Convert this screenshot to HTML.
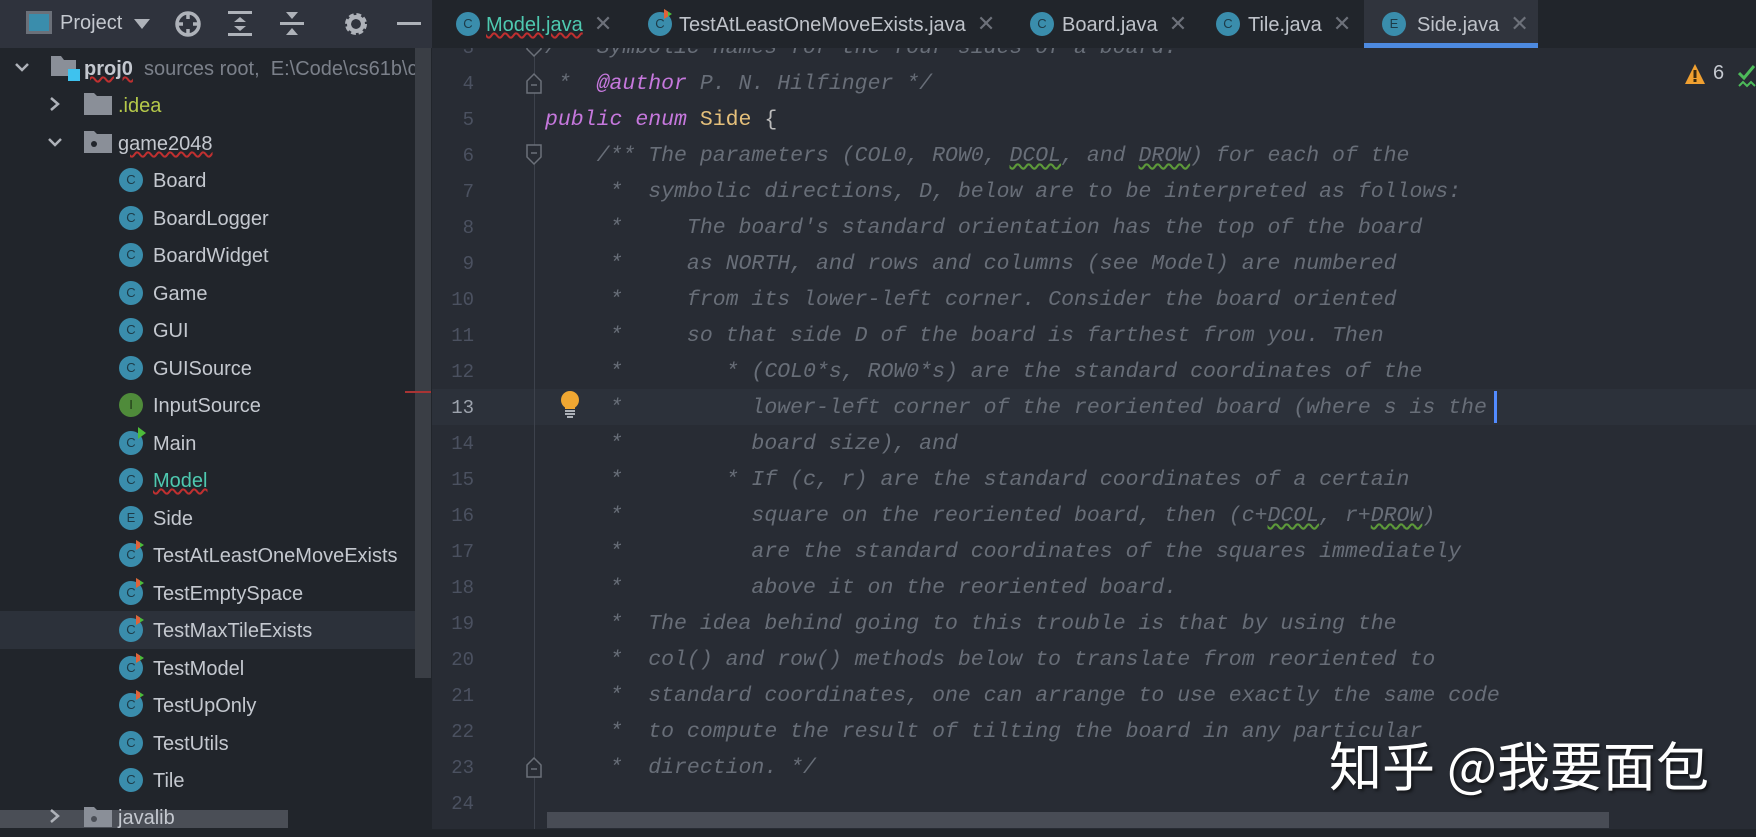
<!DOCTYPE html>
<html><head><meta charset="utf-8"><style>
*{margin:0;padding:0;box-sizing:border-box}
body{width:1756px;height:837px;overflow:hidden;background:#282c34;position:relative;font-family:"Liberation Sans","Noto Sans CJK SC",sans-serif}
.a{position:absolute}
#side{left:0;top:0;width:432px;height:837px;background:#21252b}
#tb{left:0;top:0;width:432px;height:48px;background:#2f333d}
#tabs{left:432px;top:0;width:1324px;height:48px;background:#21252b}
.row{position:absolute;height:37px;line-height:38px;font-size:20px;color:#c4c8cf;white-space:nowrap}
.ci{position:absolute;width:24px;height:24px;border-radius:50%;background:#3a8dac;color:#1d3b48;font-size:13px;text-align:center;line-height:24px;font-family:"Liberation Sans",sans-serif}
.code{position:absolute;left:545px;font-family:"Liberation Mono",monospace;font-size:21.5px;white-space:pre;color:#686e78;font-style:italic;height:36px;line-height:38px}
.ln{position:absolute;left:440px;width:34px;text-align:right;font-family:"Liberation Mono",monospace;font-size:19px;color:#4b5160;height:36px;line-height:38px}
.tab{position:absolute;top:0;height:48px;line-height:48px;font-size:20px;color:#bfc3ca;white-space:nowrap}
.x{color:#6d717a;font-size:22px}
.w{text-decoration:underline wavy #5d9a3a}
</style></head><body>
<div id="side" class="a"></div>
<div class="a" style="left:0;top:611px;width:415px;height:38px;background:#2c313a"></div>
<div id="tb" class="a"></div>
<div class="a" style="left:26px;top:11px;width:26px;height:23px;border:3px solid #6b7079;background:#3a8dac"></div>
<div class="a" style="left:60px;top:0;height:48px;line-height:46px;font-size:20px;color:#c4c8cf">Project</div>
<svg class="a" style="left:133px;top:14px" width="18" height="18"><path d="M1 5h16l-8 10z" fill="#aeb2b9"/></svg>
<svg class="a" style="left:174px;top:10px" width="28" height="28" fill="none" stroke="#aeb2b9" stroke-width="3.5"><circle cx="14" cy="14" r="11"/><path d="M14 2v7M14 19v7M2 14h7M19 14h7"/></svg>
<svg class="a" style="left:226px;top:10px" width="28" height="28" fill="#aeb2b9"><rect x="2" y="1" width="24" height="3"/><rect x="2" y="23" width="24" height="3"/><path d="M14 7l6 5H8zM14 21l6-5H8z"/></svg>
<svg class="a" style="left:278px;top:10px" width="28" height="28" fill="#aeb2b9"><rect x="2" y="12" width="24" height="3"/><path d="M8 2h12l-6 7zM8 25h12l-6-7z"/></svg>
<svg class="a" style="left:343px;top:11px" width="26" height="26"><circle cx="13" cy="13" r="8" fill="none" stroke="#aeb2b9" stroke-width="6" stroke-dasharray="4 2.3"/><circle cx="13" cy="13" r="7" fill="none" stroke="#aeb2b9" stroke-width="4"/></svg>
<div class="a" style="left:397px;top:22px;width:24px;height:3px;background:#aeb2b9"></div>

<svg class="a" style="left:14px;top:60px" width="16" height="16" fill="none" stroke="#aeb2b9" stroke-width="2.5"><path d="M2 4l6 6 6-6"/></svg>
<svg class="a" style="left:50px;top:54px" width="30" height="28"><path d="M1 2h10l3 4h12v16H1z" fill="#8a8f98"/><rect x="18" y="15" width="12" height="12" fill="#3ec2ee"/></svg>
<div class="row" style="left:84px;top:50px"><b style="color:#c4c8cf;text-decoration:underline wavy #c03030">proj0</b> <span style="color:#7b808a">&nbsp;sources root,&nbsp; E:\Code\cs61b\cs</span></div>
<svg class="a" style="left:48px;top:96px" width="14" height="16" fill="none" stroke="#aeb2b9" stroke-width="2.5"><path d="M3 2l7 6-7 6"/></svg>
<svg class="a" style="left:84px;top:92px" width="28" height="24"><path d="M0 1h10l3 3h15v19H0z" fill="#8a8f98"/></svg>
<div class="row" style="left:118px;top:87px;color:#b5c94a">.idea</div>
<svg class="a" style="left:47px;top:135px" width="16" height="16" fill="none" stroke="#aeb2b9" stroke-width="2.5"><path d="M2 4l6 6 6-6"/></svg>
<svg class="a" style="left:84px;top:130px" width="28" height="24"><path d="M0 1h10l3 3h15v19H0z" fill="#8a8f98"/><circle cx="10" cy="14" r="3" fill="#21252b"/></svg>
<div class="row" style="left:118px;top:125px"><span style="text-decoration:underline wavy #c03030">game2048</span></div>

<div class="ci" style="left:119px;top:168px">C</div><div class="row" style="left:153px;top:162px">Board</div>
<div class="ci" style="left:119px;top:206px">C</div><div class="row" style="left:153px;top:200px">BoardLogger</div>
<div class="ci" style="left:119px;top:243px">C</div><div class="row" style="left:153px;top:237px">BoardWidget</div>
<div class="ci" style="left:119px;top:281px">C</div><div class="row" style="left:153px;top:275px">Game</div>
<div class="ci" style="left:119px;top:318px">C</div><div class="row" style="left:153px;top:312px">GUI</div>
<div class="ci" style="left:119px;top:356px">C</div><div class="row" style="left:153px;top:350px">GUISource</div>
<div class="ci" style="left:119px;top:393px;background:#4f8b3a;color:#1e3616">I</div><div class="row" style="left:153px;top:387px">InputSource</div>
<div class="ci" style="left:119px;top:431px">C</div><svg class="a" style="left:137px;top:426px" width="10" height="14"><path d="M1 1l8 6-8 6z" fill="#4dbb3a"/></svg><div class="row" style="left:153px;top:425px">Main</div>
<div class="ci" style="left:119px;top:468px">C</div><div class="row" style="left:153px;top:462px;color:#4ec9b0"><span style="text-decoration:underline wavy #c03030">Model</span></div>
<div class="ci" style="left:119px;top:506px">E</div><div class="row" style="left:153px;top:500px">Side</div>
<div class="ci" style="left:119px;top:543px">C</div><svg class="a" style="left:134px;top:539px" width="12" height="12"><path d="M2 1l8 5-8 5z" fill="#4dbb3a"/><path d="M2 1l4 2.5v5L2 11z" fill="#e0623a"/></svg><div class="row" style="left:153px;top:537px">TestAtLeastOneMoveExists</div>
<div class="ci" style="left:119px;top:581px">C</div><svg class="a" style="left:134px;top:577px" width="12" height="12"><path d="M2 1l8 5-8 5z" fill="#4dbb3a"/><path d="M2 1l4 2.5v5L2 11z" fill="#e0623a"/></svg><div class="row" style="left:153px;top:575px">TestEmptySpace</div>
<div class="ci" style="left:119px;top:618px">C</div><svg class="a" style="left:134px;top:614px" width="12" height="12"><path d="M2 1l8 5-8 5z" fill="#4dbb3a"/><path d="M2 1l4 2.5v5L2 11z" fill="#e0623a"/></svg><div class="row" style="left:153px;top:612px">TestMaxTileExists</div>
<div class="ci" style="left:119px;top:656px">C</div><svg class="a" style="left:134px;top:652px" width="12" height="12"><path d="M2 1l8 5-8 5z" fill="#4dbb3a"/><path d="M2 1l4 2.5v5L2 11z" fill="#e0623a"/></svg><div class="row" style="left:153px;top:650px">TestModel</div>
<div class="ci" style="left:119px;top:693px">C</div><svg class="a" style="left:134px;top:689px" width="12" height="12"><path d="M2 1l8 5-8 5z" fill="#4dbb3a"/><path d="M2 1l4 2.5v5L2 11z" fill="#e0623a"/></svg><div class="row" style="left:153px;top:687px">TestUpOnly</div>
<div class="ci" style="left:119px;top:731px">C</div><div class="row" style="left:153px;top:725px">TestUtils</div>
<div class="ci" style="left:119px;top:768px">C</div><div class="row" style="left:153px;top:762px">Tile</div>
<div class="a" style="left:0;top:810px;width:288px;height:18px;background:#4a4e56"></div>
<svg class="a" style="left:48px;top:808px" width="14" height="16" fill="none" stroke="#aeb2b9" stroke-width="2.5"><path d="M3 2l7 6-7 6"/></svg>
<svg class="a" style="left:84px;top:806px" width="28" height="22"><path d="M0 1h10l3 3h15v17H0z" fill="#8a8f98"/><circle cx="10" cy="13" r="3" fill="#4a4e56"/></svg>
<div class="row" style="left:118px;top:799px">javalib</div>
<div class="a" style="left:415px;top:48px;width:16px;height:630px;background:#3a3e45"></div>
<div class="a" style="left:405px;top:391px;width:26px;height:2px;background:#a83434"></div>

<div id="tabs" class="a"></div>
<div class="a" style="left:1364px;top:0;width:174px;height:48px;background:#30343d"></div>
<div class="a" style="left:1364px;top:43px;width:174px;height:5px;background:#4d8ae0"></div>
<div class="ci" style="left:456px;top:12px">C</div><div class="tab" style="left:486px;color:#4ec9b0"><span style="text-decoration:underline wavy #c03030">Model.java</span> &nbsp;<span class="x">✕</span></div>
<div class="ci" style="left:648px;top:12px">C</div><svg class="a" style="left:662px;top:8px" width="12" height="12"><path d="M2 1l8 5-8 5z" fill="#4dbb3a"/><path d="M2 1l4 2.5v5L2 11z" fill="#e0623a"/></svg><div class="tab" style="left:679px">TestAtLeastOneMoveExists.java &nbsp;<span class="x">✕</span></div>
<div class="ci" style="left:1030px;top:12px">C</div><div class="tab" style="left:1062px">Board.java &nbsp;<span class="x">✕</span></div>
<div class="ci" style="left:1216px;top:12px">C</div><div class="tab" style="left:1248px">Tile.java &nbsp;<span class="x">✕</span></div>
<div class="ci" style="left:1382px;top:12px">E</div><div class="tab" style="left:1417px">Side.java &nbsp;<span class="x">✕</span></div>

<div class="a" style="left:432px;top:48px;width:1324px;height:789px;overflow:hidden">
<div class="a" style="left:0;top:341px;width:1324px;height:36px;background:#2c313a"></div>
<div class="a" style="left:102px;top:0;width:1px;height:789px;background:#3d424c"></div>
</div>
<div class="a" style="left:432px;top:48px;width:1324px;height:789px;overflow:hidden">
<div style="position:absolute;left:-432px;top:-48px;width:1756px;height:837px">
<div class="ln" style="top:29px">3</div><div class="code" style="top:29px">/** Symbolic names for the four sides of a board.</div>
<div class="ln" style="top:65px">4</div><div class="code" style="top:65px"> *  <span style="color:#c678dd">@author</span> P. N. Hilfinger */</div>
<div class="ln" style="top:101px">5</div><div class="code" style="top:101px;color:#c678dd">public enum <span style="color:#e5c07b;font-style:normal">Side</span><span style="color:#bbbbbb;font-style:normal"> {</span></div>
<div class="ln" style="top:137px">6</div><div class="code" style="top:137px">    /** The parameters (COL0, ROW0, <span class="w">DCOL</span>, and <span class="w">DROW</span>) for each of the</div>
<div class="ln" style="top:173px">7</div><div class="code" style="top:173px">     *  symbolic directions, D, below are to be interpreted as follows:</div>
<div class="ln" style="top:209px">8</div><div class="code" style="top:209px">     *     The board's standard orientation has the top of the board</div>
<div class="ln" style="top:245px">9</div><div class="code" style="top:245px">     *     as NORTH, and rows and columns (see Model) are numbered</div>
<div class="ln" style="top:281px">10</div><div class="code" style="top:281px">     *     from its lower-left corner. Consider the board oriented</div>
<div class="ln" style="top:317px">11</div><div class="code" style="top:317px">     *     so that side D of the board is farthest from you. Then</div>
<div class="ln" style="top:353px">12</div><div class="code" style="top:353px">     *        * (COL0*s, ROW0*s) are the standard coordinates of the</div>
<div class="ln" style="top:389px;color:#9da3ad">13</div><div class="code" style="top:389px">     *          lower-left corner of the reoriented board (where s is the</div>
<div class="ln" style="top:425px">14</div><div class="code" style="top:425px">     *          board size), and</div>
<div class="ln" style="top:461px">15</div><div class="code" style="top:461px">     *        * If (c, r) are the standard coordinates of a certain</div>
<div class="ln" style="top:497px">16</div><div class="code" style="top:497px">     *          square on the reoriented board, then (c+<span class="w">DCOL</span>, r+<span class="w">DROW</span>)</div>
<div class="ln" style="top:533px">17</div><div class="code" style="top:533px">     *          are the standard coordinates of the squares immediately</div>
<div class="ln" style="top:569px">18</div><div class="code" style="top:569px">     *          above it on the reoriented board.</div>
<div class="ln" style="top:605px">19</div><div class="code" style="top:605px">     *  The idea behind going to this trouble is that by using the</div>
<div class="ln" style="top:641px">20</div><div class="code" style="top:641px">     *  col() and row() methods below to translate from reoriented to</div>
<div class="ln" style="top:677px">21</div><div class="code" style="top:677px">     *  standard coordinates, one can arrange to use exactly the same code</div>
<div class="ln" style="top:713px">22</div><div class="code" style="top:713px">     *  to compute the result of tilting the board in any particular</div>
<div class="ln" style="top:749px">23</div><div class="code" style="top:749px">     *  direction. */</div>
<div class="ln" style="top:785px">24</div>
<svg class="a" style="left:526px;top:36px" width="16" height="22" fill="#282c34" stroke="#6b7079" stroke-width="1.5"><path d="M1 1h14v12l-7 7-7-7z"/></svg>
<svg class="a" style="left:526px;top:72px" width="16" height="22" fill="#282c34" stroke="#6b7079" stroke-width="1.5"><path d="M1 21h14V9L8 2 1 9z"/><path d="M5 13h6"/></svg>
<svg class="a" style="left:526px;top:144px" width="16" height="22" fill="#282c34" stroke="#6b7079" stroke-width="1.5"><path d="M1 1h14v12l-7 7-7-7z"/><path d="M5 9h6"/></svg>
<svg class="a" style="left:526px;top:756px" width="16" height="22" fill="#282c34" stroke="#6b7079" stroke-width="1.5"><path d="M1 21h14V9L8 2 1 9z"/><path d="M5 13h6"/></svg>
<svg class="a" style="left:559px;top:390px" width="22" height="30"><circle cx="11" cy="10" r="9" fill="#f0a732"/><path d="M6 15h10v4H6z" fill="#f0a732"/><path d="M6 21h10M6 24h10M8 27h6" stroke="#aeb2b9" stroke-width="2"/></svg>
<div class="a" style="left:1494px;top:391px;width:3px;height:32px;background:#528bff"></div>
</div></div>
<svg class="a" style="left:1684px;top:63px" width="22" height="22"><path d="M11 1l10 20H1z" fill="#f0a030"/><rect x="9.5" y="7" width="3" height="8" fill="#3a2a10"/><rect x="9.5" y="16" width="3" height="3" fill="#3a2a10"/></svg>
<div class="a" style="left:1713px;top:62px;font-size:20px;color:#c4c8cf">6</div>
<svg class="a" style="left:1738px;top:64px" width="18" height="24" fill="none" stroke="#4dbb5a" stroke-width="3"><path d="M1 9l5 5 10-12"/><path d="M1 22l4-4 4 4 4-4 4 4" stroke-width="2"/></svg>
<div class="a" style="left:547px;top:812px;width:1062px;height:16px;background:#484c55"></div>
<div class="a" style="left:432px;top:829px;width:1324px;height:8px;background:#21252b"></div>
<div class="a" style="left:1329px;top:726px;font-size:53px;color:#fff;font-family:'Noto Sans CJK SC','Liberation Sans',sans-serif;white-space:nowrap;text-shadow:2px 2px 3px rgba(0,0,0,.6)">知乎 @我要面包</div>
</body></html>
